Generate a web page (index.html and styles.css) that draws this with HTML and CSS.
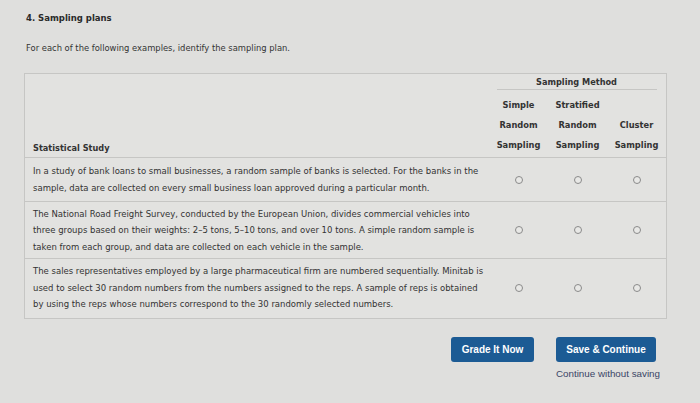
FILE: index.html
```html
<!DOCTYPE html>
<html>
<head>
<meta charset="utf-8">
<link rel="stylesheet" href="styles.css">
</head>
<body>
<div class="page">
  <h1 class="title">4. Sampling plans</h1>
  <p class="intro">For each of the following examples, identify the sampling plan.</p>
  <div class="table">
    <div class="head">
      <div class="head-study">Statistical Study</div>
      <div class="head-methods">
        <div class="method-title">Sampling Method</div>
        <div class="method-cols">
          <div class="mcol">Simple<br>Random<br>Sampling</div>
          <div class="mcol">Stratified<br>Random<br>Sampling</div>
          <div class="mcol">&nbsp;<br>Cluster<br>Sampling</div>
        </div>
      </div>
    </div>
    <div class="row r1">
      <div class="study">In a study of bank loans to small businesses, a random sample of banks is selected. For the banks in the sample, data are collected on every small business loan approved during a particular month.</div>
      <div class="opt"><span class="radio"></span></div>
      <div class="opt"><span class="radio"></span></div>
      <div class="opt"><span class="radio"></span></div>
    </div>
    <div class="row r2">
      <div class="study">The National Road Freight Survey, conducted by the European Union, divides commercial vehicles into three groups based on their weights: 2–5 tons, 5–10 tons, and over 10 tons. A simple random sample is taken from each group, and data are collected on each vehicle in the sample.</div>
      <div class="opt"><span class="radio"></span></div>
      <div class="opt"><span class="radio"></span></div>
      <div class="opt"><span class="radio"></span></div>
    </div>
    <div class="row r3">
      <div class="study">The sales representatives employed by a large pharmaceutical firm are numbered sequentially. Minitab is used to select 30 random numbers from the numbers assigned to the reps. A sample of reps is obtained by using the reps whose numbers correspond to the 30 randomly selected numbers.</div>
      <div class="opt"><span class="radio"></span></div>
      <div class="opt"><span class="radio"></span></div>
      <div class="opt"><span class="radio"></span></div>
    </div>
  </div>
  <div class="actions">
    <button class="btn grade">Grade It Now</button>
    <div class="save-group">
      <button class="btn save">Save &amp; Continue</button>
      <a class="skip">Continue without saving</a>
    </div>
  </div>
</div>
</body>
</html>
```

FILE: styles.css
```css
html, body {
  margin: 0;
  padding: 0;
  background: #dfdfdd;
}
body {
  width: 700px;
  height: 403px;
  overflow: hidden;
  font-family: "DejaVu Sans", Verdana, sans-serif;
  color: #333;
}
.page {
  padding: 12px 33px 0 24px;
}
.title {
  margin: 0 0 0 2px;
  font-size: 8.5px;
  font-weight: bold;
  line-height: 12px;
  color: #2a2a2a;
}
.intro {
  margin: 18px 0 0 2px;
  font-size: 8.4px;
  line-height: 12px;
  color: #333;
}
.table {
  margin-top: 19px;
  border: 1px solid #c6c6c4;
  width: 641px;
  background: #e2e2e0;
}
.head {
  display: flex;
  height: 83px;
  border-bottom: 1px solid #c6c6c4;
}
.head-study {
  width: 458px;
  padding-left: 8px;
  align-self: flex-end;
  padding-bottom: 3px;
  font-size: 8.2px;
  font-weight: bold;
  line-height: 12px;
}
.head-methods {
  flex: 1;
  display: flex;
  flex-direction: column;
  align-items: center;
}
.method-title {
  width: 160px;
  text-align: center;
  font-size: 8.2px;
  font-weight: bold;
  line-height: 14px;
  padding-top: 1px;
  border-bottom: 1px solid #c6c6c4;
}
.method-cols {
  display: flex;
  margin-top: 5px;
  margin-left: 2px;
}
.mcol {
  width: 59px;
  text-align: center;
  font-size: 8.3px;
  font-weight: bold;
  line-height: 20px;
}
.row {
  display: flex;
  align-items: center;
  border-top: 1px solid #c6c6c4;
}
.r1 { border-top: none; }
.study {
  width: 452px;
  padding: 4px 6px 5px 8px;
  font-size: 8.5px;
  line-height: 16.5px;
}
.r1 .study { padding-top: 5px; padding-bottom: 5px; }
.r2 .study { padding-top: 3.5px; padding-bottom: 3px; }
.opt {
  width: 59px;
  display: flex;
  justify-content: center;
}
.radio {
  width: 6px;
  height: 6px;
  border: 1px solid #8a8a8a;
  border-radius: 50%;
  background: #e8e8e6;
}
.actions {
  display: flex;
  justify-content: flex-end;
  gap: 22px;
  margin-top: 18px;
  margin-right: 11px;
}
.save-group {
  width: 100px;
  display: flex;
  flex-direction: column;
  align-items: flex-start;
}
.btn {
  height: 25px;
  border: none;
  border-radius: 3px;
  background: #1c5b94;
  color: #fff;
  font-family: "Liberation Sans", Arial, sans-serif;
  font-weight: bold;
  font-size: 10px;
  padding: 0;
  cursor: pointer;
}
.grade { width: 83px; }
.save { width: 100px; }
.skip {
  margin-top: 6px;
  font-family: "Liberation Sans", Arial, sans-serif;
  font-size: 9.8px;
  color: #3a4566;
  line-height: 11px;
  white-space: nowrap;
}
```
